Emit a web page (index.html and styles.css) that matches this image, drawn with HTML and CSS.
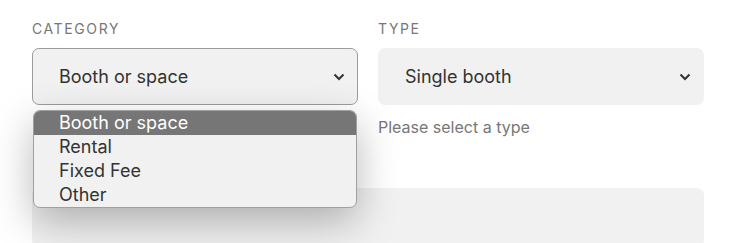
FILE: index.html
```html
<!DOCTYPE html>
<html lang="en">
<head>
    <meta charset="UTF-8">
    <meta name="viewport" content="width=device-width, initial-scale=1.0">
    <title>Booth Fee</title>
    <link rel="stylesheet" href="styles.css">
</head>
<body>
<div class="form">
    <div class="row">
        <div class="field">
            <label class="field-label">Category</label>
            <div class="select select-open">
                <span>Booth or space</span>
                <svg class="chevron" width="12" height="8" viewBox="0 0 12 8"><polyline points="1.5,1.5 6,6 10.5,1.5" fill="none" stroke="#333" stroke-width="2"/></svg>
            </div>
            <ul class="dropdown">
                <li class="option selected">Booth or space</li>
                <li class="option">Rental</li>
                <li class="option">Fixed Fee</li>
                <li class="option">Other</li>
            </ul>
        </div>
        <div class="field">
            <label class="field-label">Type</label>
            <div class="select">
                <span>Single booth</span>
                <svg class="chevron" width="12" height="8" viewBox="0 0 12 8"><polyline points="1.5,1.5 6,6 10.5,1.5" fill="none" stroke="#333" stroke-width="2"/></svg>
            </div>
            <div class="hint">Please select a type</div>
        </div>
    </div>
    <div class="input-box"></div>
</div>
</body>
</html>
```

FILE: styles.css
```css
body {
    margin: 0;
    background-color: #ffffff;
    font-family: 'Inter', 'Noto Sans', Arial, sans-serif;
    color: #333;
    overflow: hidden;
}
.form {
    padding: 19px 28px 0 32px;
}
.row {
    display: grid;
    grid-template-columns: 326px 326px;
    column-gap: 20px;
}
.field {
    position: relative;
}
.field-label {
    display: block;
    font-size: 14px;
    line-height: 19px;
    letter-spacing: 1.6px;
    text-transform: uppercase;
    color: #777;
    margin-bottom: 10px;
}
.select {
    height: 57px;
    box-sizing: border-box;
    background-color: #f1f1f1;
    border-radius: 7px;
    display: flex;
    align-items: center;
    justify-content: space-between;
    padding: 0 13px 0 27px;
    font-size: 18px;
    color: #333;
}
.select-open {
    border: 1px solid #9c9c9c;
    padding-left: 26px;
    padding-right: 12px;
}
.dropdown {
    position: absolute;
    top: 91px;
    left: 1px;
    width: 324px;
    box-sizing: border-box;
    margin: 0;
    padding: 0;
    list-style: none;
    background-color: #f1f1f1;
    border: 1px solid #a0a0a0;
    border-radius: 7px;
    overflow: hidden;
    box-shadow: 0 14px 40px rgba(0, 0, 0, 0.28);
    z-index: 2;
}
.option {
    height: 24px;
    line-height: 24px;
    padding-left: 25px;
    font-size: 18px;
    color: #333;
}
.option.selected {
    background-color: #767676;
    color: #fff;
}
.hint {
    margin-top: 12px;
    font-size: 16px;
    line-height: 20px;
    color: #777;
}
.input-box {
    margin-top: 51px;
    height: 60px;
    background-color: #f1f1f1;
    border-radius: 7px;
}
```
